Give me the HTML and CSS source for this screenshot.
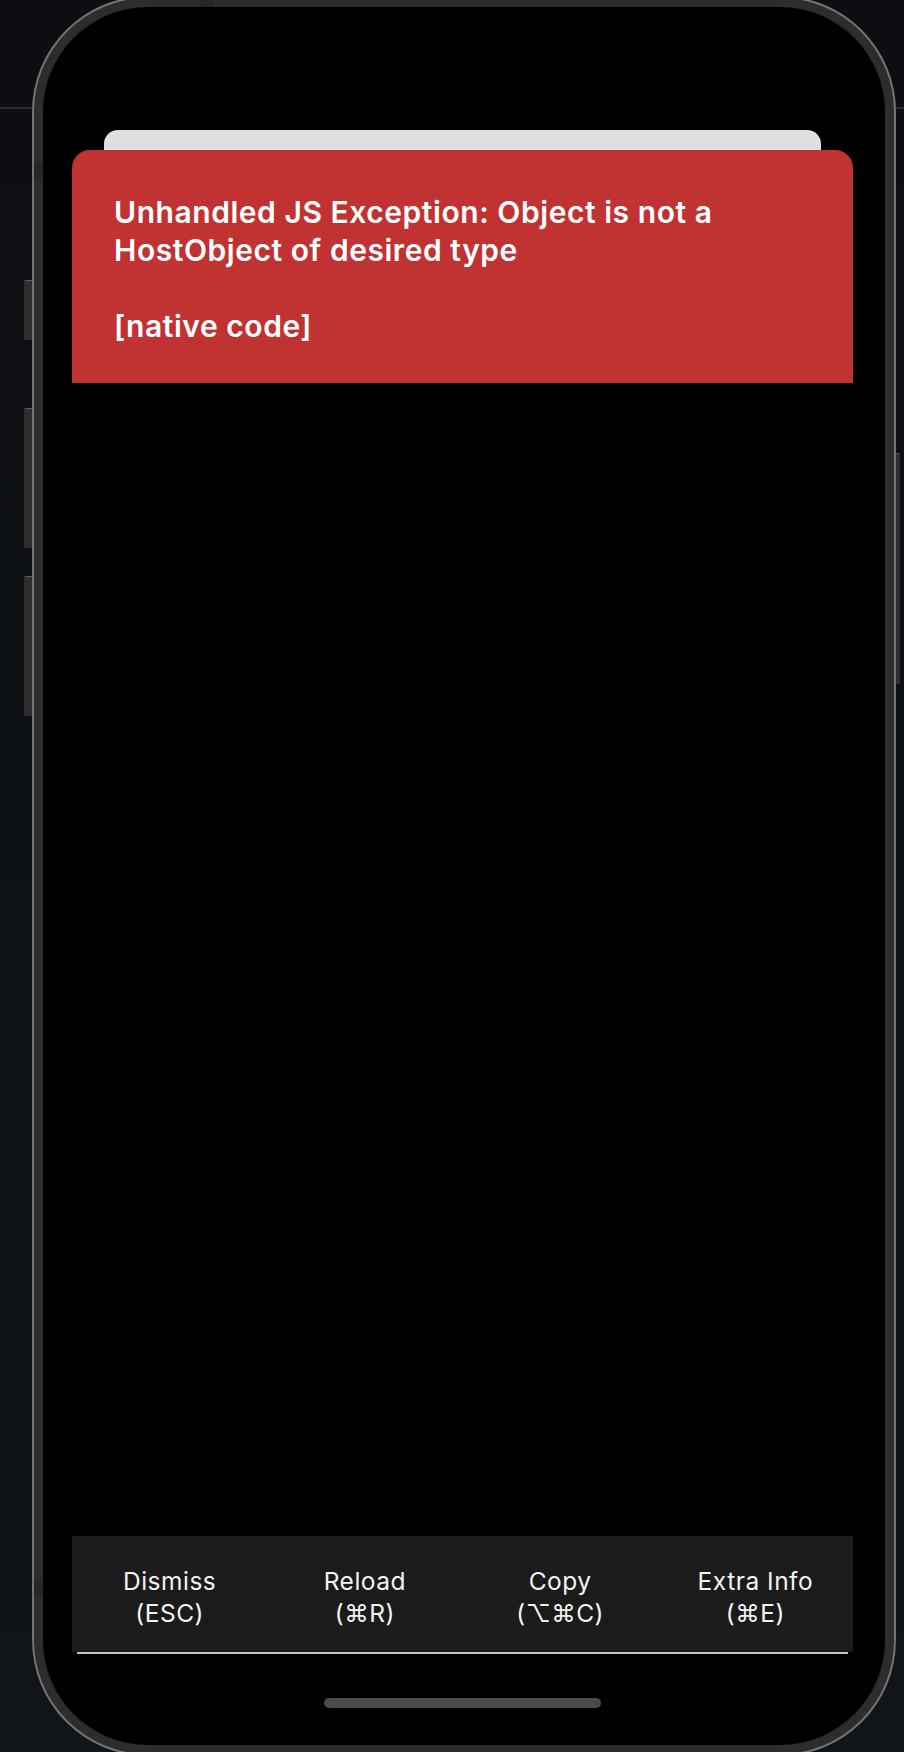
FILE: index.html
```html
<!DOCTYPE html>
<html lang="en">
<head>
<meta charset="utf-8">
<title>Unhandled JS Exception</title>
<link rel="stylesheet" href="styles.css">
</head>
<body>
<div class="phone">
  <span class="side-btn left b1"></span>
  <span class="side-btn left b2"></span>
  <span class="side-btn left b3"></span>
  <span class="side-btn right b4"></span>
  <span class="band band-top"></span>
  <span class="band band-left1"></span>
  <span class="band band-left2"></span>
  <div class="frame">
    <div class="screen">
      <div class="sheet-back"></div>
      <div class="error-panel">
        <p class="error-text">Unhandled JS Exception: Object is not a HostObject of desired type</p>
        <p class="error-text gap">[native code]</p>
      </div>
      <div class="actions">
        <div class="action">Dismiss<br>(ESC)</div>
        <div class="action">Reload<br>(⌘R)</div>
        <div class="action">Copy<br>(⌥⌘C)</div>
        <div class="action">Extra Info<br>(⌘E)</div>
      </div>
      <div class="actions-line"></div>
      <div class="home-area">
        <div class="home-indicator"></div>
      </div>
    </div>
  </div>
</div>
</body>
</html>
```

FILE: styles.css
```css
html, body {
  margin: 0;
  padding: 0;
}

body {
  width: 904px;
  height: 1752px;
  overflow: hidden;
  background:
    linear-gradient(to bottom, transparent 107px, #2a2d31 107px, #2a2d31 109px, transparent 109px),
    linear-gradient(to bottom, #0c0e12 0, #0e1115 60%, #111418 100%);
  font-family: "Inter", "Noto Sans", sans-serif;
}

.phone {
  position: relative;
  width: 864px;
  height: 1760px;
  margin: -4px 0 0 32px;
  box-sizing: border-box;
  border-radius: 116px;
  background: #727272;
  padding: 2px;
}

.frame {
  height: 100%;
  box-sizing: border-box;
  border-radius: 114px;
  background: #2d2d2d;
  padding: 9px;
}

.screen {
  height: 100%;
  box-sizing: border-box;
  border-radius: 105px;
  background: #000;
  display: flex;
  flex-direction: column;
  padding: 0 32px 0 29px;
}

.side-btn {
  position: absolute;
  background: #2e2e2e;
  border-top: 1px solid #5a5a5a;
  box-sizing: border-box;
}

.side-btn.left {
  left: -8px;
  width: 8px;
  border-radius: 2px 0 0 2px;
}

.side-btn.right {
  right: -4px;
  width: 4px;
  border-radius: 0 2px 2px 0;
}

.b1 { top: 284px; height: 60px; }
.b2 { top: 412px; height: 140px; }
.b3 { top: 580px; height: 140px; }
.b4 { top: 457px; height: 231px; }

.band {
  position: absolute;
  background: #262626;
}

.band-top {
  top: 0;
  left: 168px;
  width: 13px;
  height: 11px;
}

.band-left1 {
  left: 2px;
  top: 167px;
  width: 9px;
  height: 15px;
}

.band-left2 {
  left: 2px;
  top: 1586px;
  width: 9px;
  height: 13px;
}

.sheet-back {
  margin: 123px 32px 0 32px;
  height: 20px;
  background: #e0e0e0;
  border-radius: 14px 14px 0 0;
}

.error-panel {
  background: #c13232;
  border-radius: 18px 18px 0 0;
  padding: 43px 24px 38px 42px;
}

.error-text {
  margin: 0;
  color: #ffffff;
  font-size: 30px;
  line-height: 38px;
  font-weight: 600;
  letter-spacing: 0.55px;
}

.error-text.gap {
  margin-top: 38px;
}

.actions {
  margin-top: auto;
  background: #1b1b1b;
  display: grid;
  grid-template-columns: repeat(4, 1fr);
  padding: 29px 0 23px 0;
}

.action {
  text-align: center;
  color: #f2f2f2;
  font-size: 24.5px;
  line-height: 32px;
  font-weight: 400;
  letter-spacing: 0.5px;
}

.actions-line {
  height: 2px;
  margin: 0 5px;
  background: #c4c4c4;
}

.home-area {
  display: flex;
  justify-content: center;
  padding: 44px 0 37px 0;
}

.home-indicator {
  width: 277px;
  height: 10px;
  border-radius: 5px;
  background: #4a4a4a;
}
```
